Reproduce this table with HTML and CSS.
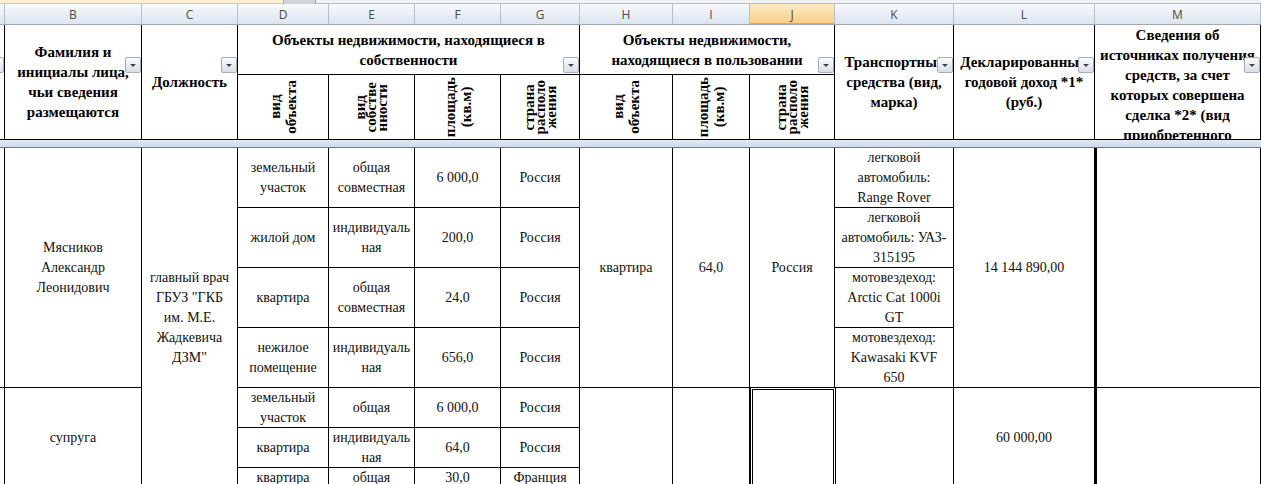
FILE: index.html
```html
<!DOCTYPE html>
<html lang="ru">
<head>
<meta charset="utf-8">
<title>Сведения о доходах</title>
<link rel="stylesheet" href="styles.css">
</head>
<body>
<div class="topbar">
  <div class="tb-yellow"></div>
  <div class="tb-tab"></div>
  <div class="tb-rest"></div>
</div>
<div class="grid colheads">
  <div class="ch"></div>
  <div class="ch">B</div>
  <div class="ch">C</div>
  <div class="ch">D</div>
  <div class="ch">E</div>
  <div class="ch">F</div>
  <div class="ch">G</div>
  <div class="ch">H</div>
  <div class="ch">I</div>
  <div class="ch sel">J</div>
  <div class="ch">K</div>
  <div class="ch">L</div>
  <div class="ch">M</div>
</div>
<div class="grid sheet">
  <!-- header -->
  <div class="cell gA y1 h2"><span class="fbtn"></span></div>
  <div class="cell hd gB y1 h2">Фамилия и<br>инициалы лица,<br>чьи сведения<br>размещаются<span class="fbtn"></span></div>
  <div class="cell hd gC y1 h2">Должность<span class="fbtn"></span></div>
  <div class="cell hd gDG y1">Объекты недвижимости, находящиеся в<br>собственности<span class="fbtn"></span></div>
  <div class="cell hd gHJ y1">Объекты недвижимости,<br>находящиеся в пользовании<span class="fbtn"></span></div>
  <div class="cell hd gK y1 h2">Транспортные<br>средства (вид,<br>марка)<span class="fbtn"></span></div>
  <div class="cell hd gL y1 h2">Декларированный<br>годовой доход *1*<br>(руб.)<span class="fbtn"></span></div>
  <div class="cell hd top gM y1 h2">Сведения об<br>источниках получения<br>средств, за счет<br>которых совершена<br>сделка *2* (вид<br>приобретенного<br>имущества, источники)<span class="fbtn"></span></div>

  <div class="cell hd gD y2"><span class="rot">вид<br>объекта</span></div>
  <div class="cell hd gE y2"><span class="rot tight">вид<br>собстве<br>нности</span></div>
  <div class="cell hd gF y2"><span class="rot">площадь<br>(кв.м)</span></div>
  <div class="cell hd gG y2"><span class="rot tight">страна<br>располо<br>жения</span></div>
  <div class="cell hd gH y2"><span class="rot">вид<br>объекта</span></div>
  <div class="cell hd gI y2"><span class="rot">площадь<br>(кв.м)</span></div>
  <div class="cell hd gJ y2"><span class="rot tight">страна<br>располо<br>жения</span></div>

  <div class="band"></div>

  <!-- Мясников -->
  <div class="cell gA y4 h4"></div>
  <div class="cell gB y4 h4">Мясников<br>Александр<br>Леонидович</div>
  <div class="cell gC y4 h7">главный врач<br>ГБУЗ "ГКБ<br>им. М.Е.<br>Жадкевича<br>ДЗМ"</div>

  <div class="cell gD y4">земельный<br>участок</div>
  <div class="cell gE y4">общая<br>совместная</div>
  <div class="cell gF y4">6 000,0</div>
  <div class="cell gG y4">Россия</div>

  <div class="cell gD y5">жилой дом</div>
  <div class="cell gE y5">индивидуаль<br>ная</div>
  <div class="cell gF y5">200,0</div>
  <div class="cell gG y5">Россия</div>

  <div class="cell gD y6">квартира</div>
  <div class="cell gE y6">общая<br>совместная</div>
  <div class="cell gF y6">24,0</div>
  <div class="cell gG y6">Россия</div>

  <div class="cell gD y7">нежилое<br>помещение</div>
  <div class="cell gE y7">индивидуаль<br>ная</div>
  <div class="cell gF y7">656,0</div>
  <div class="cell gG y7">Россия</div>

  <div class="cell gH y4 h4">квартира</div>
  <div class="cell gI y4 h4">64,0</div>
  <div class="cell gJ y4 h4">Россия</div>

  <div class="cell gK y4">легковой<br>автомобиль:<br>Range Rover</div>
  <div class="cell gK y5">легковой<br>автомобиль: УАЗ-<br>315195</div>
  <div class="cell gK y6">мотовездеход:<br>Arctic Cat 1000i<br>GT</div>
  <div class="cell gK y7">мотовездеход:<br>Kawasaki KVF<br>650</div>

  <div class="cell gL y4 h4">14 144 890,00</div>
  <div class="cell gM thick y4 h4"></div>

  <!-- супруга -->
  <div class="cell gA y8 h3"></div>
  <div class="cell gB y8 h3">супруга</div>

  <div class="cell gD y8">земельный<br>участок</div>
  <div class="cell gE y8">общая</div>
  <div class="cell gF y8">6 000,0</div>
  <div class="cell gG y8">Россия</div>

  <div class="cell gD y9">квартира</div>
  <div class="cell gE y9">индивидуаль<br>ная</div>
  <div class="cell gF y9">64,0</div>
  <div class="cell gG y9">Россия</div>

  <div class="cell gD y10">квартира</div>
  <div class="cell gE y10">общая</div>
  <div class="cell gF y10">30,0</div>
  <div class="cell gG y10">Франция</div>

  <div class="cell gH y8 h3"></div>
  <div class="cell gI y8 h3"></div>
  <div class="cell gJ y8 h3 jsel"></div>
  <div class="cell gK y8 h3"></div>
  <div class="cell gL y8 h3">60 000,00</div>
  <div class="cell gM thick y8 h3"></div>
</div>
</body>
</html>
```
FILE: styles.css
```css
* { box-sizing: border-box; }
html, body { margin: 0; padding: 0; }
body {
  width: 1261px;
  height: 484px;
  overflow: hidden;
  background: #fff;
  color: #000;
  font-family: "Liberation Serif", "Times New Roman", serif;
}

/* top strip */
.topbar { display: flex; height: 4px; }
.tb-yellow { width: 283px; background: #fcefd0; border-bottom: 1px solid #d8cba8; }
.tb-tab { width: 33px; background: #cfd3da; border-left: 1px solid #9ea5b0; border-right: 1px solid #9ea5b0; }
.tb-rest { flex: 1; background: #f1f2f4; border-bottom: 1px solid #b8bec8; }

/* shared column template */
.grid {
  display: grid;
  grid-template-columns: 5px 137px 96px 91px 86px 86px 79px 93px 77px 85px 119px 141px 166px;
}

/* column letters */
.colheads {
  height: 21px;
  background: linear-gradient(#f8fafd, #dce4ef);
  border-bottom: 1px solid #9aa8ba;
}
.ch {
  display: flex;
  align-items: center;
  justify-content: center;
  border-right: 1px solid #b5c0cf;
  font-family: "Open Sans", "Liberation Sans", sans-serif;
  font-size: 12px;
  color: #4a4a4a;
}
.ch.sel { background: linear-gradient(#fdebc4, #f6cf86); box-shadow: inset 0 -1px 0 #e4a54a; }

/* sheet */
.sheet {
  grid-template-rows: 50px 65px 8px 60px 60px 60px 60px 40px 40px 20px;
}
.cell {
  position: relative;
  display: flex;
  align-items: center;
  justify-content: center;
  text-align: center;
  border-right: 1px solid #000;
  border-bottom: 1px solid #000;
  font-size: 14px;
  line-height: 20px;
  white-space: nowrap;
  overflow: hidden;
  color: #111;
}
.hd { font-weight: bold; font-size: 15px; color: #000; }
.top { align-items: flex-start; }
.thick { border-left: 2px solid #000; }

.band {
  grid-column: 1 / -1;
  grid-row: 3;
  background: linear-gradient(#e1e9f4, #cfdbea);
  border-bottom: 1px solid #6f7b8b;
}

/* rotated header text */
.rot {
  writing-mode: vertical-rl;
  transform: rotate(180deg);
  text-align: center;
  line-height: 16px;
}
.rot.tight { line-height: 11px; }

/* autofilter buttons */
.fbtn {
  position: absolute;
  top: 32px;
  right: 0;
  width: 16px;
  height: 16px;
  border: 1px solid #a3adbb;
  border-radius: 2px;
  background: linear-gradient(#fbfcfd, #d9dee6);
}
.fbtn::after {
  content: "";
  position: absolute;
  left: 4px;
  top: 6px;
  border-left: 3.5px solid transparent;
  border-right: 3.5px solid transparent;
  border-top: 3.5px solid #3c4452;
}

/* selected cell double frame */
.jsel { overflow: visible; border-right: none; z-index: 1; }
.jsel::after {
  content: "";
  position: absolute;
  top: -1px;
  left: 0;
  right: -1px;
  bottom: 0;
  border: 3px double #000;
}

/* placement: columns */
.gA { grid-column: 1; }
.gB { grid-column: 2; }
.gC { grid-column: 3; }
.gD { grid-column: 4; }
.gE { grid-column: 5; }
.gF { grid-column: 6; }
.gG { grid-column: 7; }
.gH { grid-column: 8; }
.gI { grid-column: 9; }
.gJ { grid-column: 10; }
.gK { grid-column: 11; }
.gL { grid-column: 12; }
.gM { grid-column: 13; }
.gDG { grid-column: 4 / 8; }
.gHJ { grid-column: 8 / 11; }

/* placement: rows */
.y1 { grid-row-start: 1; }
.y2 { grid-row-start: 2; }
.y4 { grid-row-start: 4; }
.y5 { grid-row-start: 5; }
.y6 { grid-row-start: 6; }
.y7 { grid-row-start: 7; }
.y8 { grid-row-start: 8; }
.y9 { grid-row-start: 9; }
.y10 { grid-row-start: 10; }
.h2 { grid-row-end: span 2; }
.h3 { grid-row-end: span 3; }
.h4 { grid-row-end: span 4; }
.h7 { grid-row-end: span 7; }
```
